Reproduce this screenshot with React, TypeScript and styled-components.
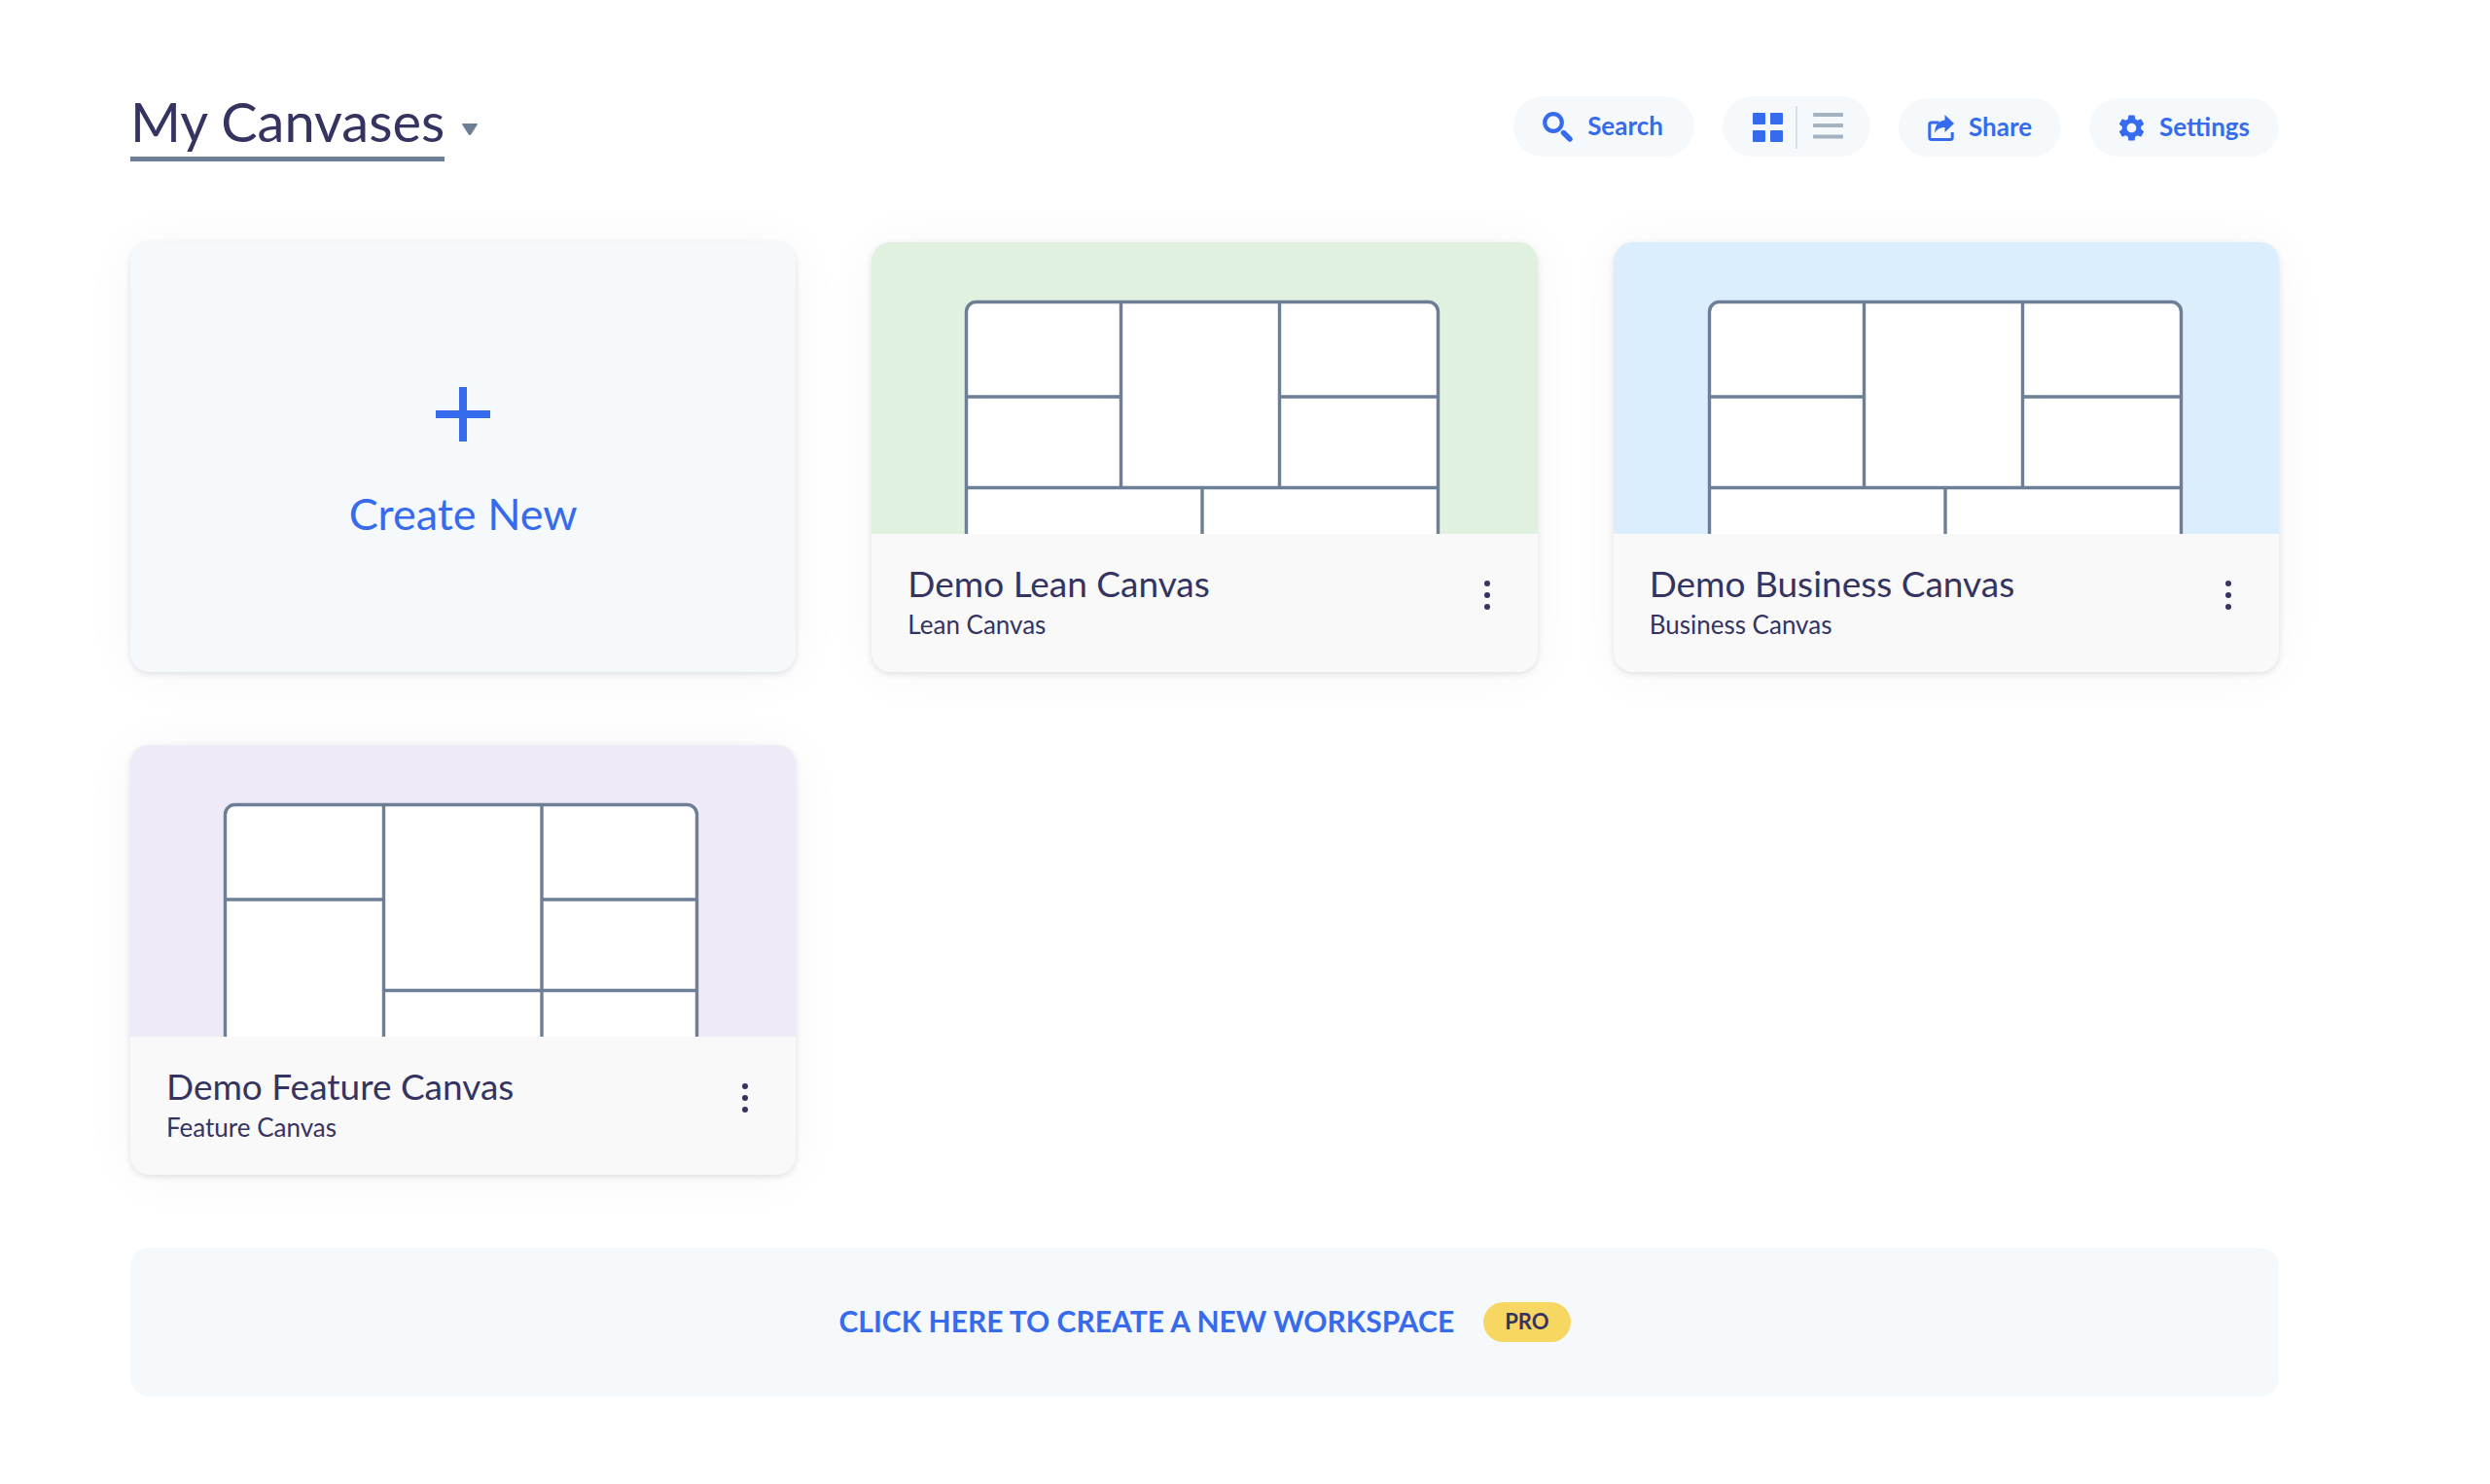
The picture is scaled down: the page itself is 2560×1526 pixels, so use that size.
import React from "react";
import styled, { createGlobalStyle } from "styled-components";

const color = {
  ink: "#353461",
  slate: "#6d7f96",
  blue: "#376bed",
  pale: "#f5f9fc",
  footer: "#f9f9f9",
  pro: "#f8d662",
};

const GlobalStyle = createGlobalStyle`
  *, *::before, *::after { box-sizing: border-box; }
  body {
    margin: 0;
    background: #ffffff;
    color: ${color.ink};
    font-family: Lato, "Open Sans", sans-serif;
  }
  button { font: inherit; color: inherit; border: 0; margin: 0; padding: 0; background: none; cursor: pointer; }
  svg { display: block; flex: none; }
  h1, h2, p { margin: 0; font-weight: 400; }
`;

const Page = styled.main`
  padding: 99px 217px 90px 134px;
`;

const Header = styled.header`
  display: flex;
  justify-content: space-between;
  align-items: flex-start;
  height: 150px;
`;

const WorkspaceButton = styled.button`
  display: flex;
  align-items: center;
  gap: 18px;
`;

const WorkspaceName = styled.span`
  font-size: 56px;
  line-height: 52px;
  padding-bottom: 10px;
  border-bottom: 5px solid ${color.slate};
`;

const Toolbar = styled.div`
  display: flex;
  align-items: flex-end;
  gap: 29px;
`;

const ToolButton = styled.button<{ $tall?: boolean }>`
  display: flex;
  align-items: center;
  gap: 15px;
  height: ${(p) => (p.$tall ? 62 : 60)}px;
  padding: 0 30px;
  padding-right: ${(p) => (p.$tall ? 32 : 30)}px;
  border-radius: 31px;
  background: ${color.pale};
  color: ${color.blue};
  font-size: 26px;
  line-height: 32px;
  font-weight: 700;
`;

const ToolLabel = styled.span`
  padding-bottom: 3px;
`;

const ViewToggle = styled.div`
  display: flex;
  align-items: center;
  height: 62px;
  padding: 1px 28px 0 31px;
  border-radius: 31px;
  background: ${color.pale};
`;

const ViewButton = styled.button<{ $active?: boolean }>`
  color: ${(p) => (p.$active ? color.blue : "#a5b2bf")};
`;

const Divider = styled.span`
  width: 2px;
  height: 44px;
  margin: 0 16px 0 13px;
  background: #dcdfec;
`;

const Grid = styled.section`
  display: grid;
  grid-template-columns: repeat(3, minmax(0, 1fr));
  gap: 75px 78px;
`;

const cardShadow = "0 2px 6px rgba(49, 48, 92, 0.13), 0 2px 56px rgba(0, 0, 0, 0.04)";

const CreateCard = styled.button`
  display: flex;
  flex-direction: column;
  align-items: center;
  justify-content: center;
  gap: 44px;
  min-height: 442px;
  padding-top: 16px;
  border-radius: 20px;
  background: ${color.pale};
  box-shadow: ${cardShadow};
  color: ${color.blue};
  font-size: 45px;
  line-height: 60px;
`;

const Card = styled.article`
  overflow: hidden;
  border-radius: 20px;
  background: ${color.footer};
  box-shadow: ${cardShadow};
`;

const Preview = styled.div<{ $tint: string }>`
  display: flex;
  justify-content: center;
  overflow: hidden;
  background: ${(p) => p.$tint};
`;

const CardFooter = styled.div`
  display: flex;
  justify-content: space-between;
  align-items: flex-start;
  height: 142px;
  padding: 27px 39px 27px 37px;
`;

const CardTitle = styled.h2`
  font-size: 37px;
  line-height: 48px;
`;

const CardKind = styled.p`
  font-size: 26px;
  line-height: 36px;
`;

const MenuButton = styled.button`
  padding: 21px 10px;
`;

const Banner = styled.button`
  display: flex;
  align-items: center;
  justify-content: center;
  gap: 30px;
  width: 100%;
  margin-top: 75px;
  padding: 56px 0;
  border-radius: 20px;
  background: ${color.pale};
  color: ${color.blue};
  font-size: 30px;
  line-height: 41px;
  font-weight: 700;
`;

const BannerLabel = styled.span`
  padding-bottom: 3px;
  line-height: 38px;
`;

const ProBadge = styled.span`
  padding: 0 22px 2px;
  border-radius: 21px;
  background: ${color.pro};
  color: ${color.ink};
  font-size: 22px;
  line-height: 39px;
`;

const SearchIcon = () => (
  <svg width="31" height="31" viewBox="0 0 31 31" fill="none" stroke="currentColor" aria-hidden="true">
    <circle cx="11" cy="11" r="8.8" strokeWidth="4.2" />
    <path d="M21.5 21.5 28 28" strokeWidth="5.4" strokeLinecap="round" />
  </svg>
);

const ShareIcon = () => (
  <svg width="27" height="27" viewBox="0 0 27 27" fill="none" stroke="currentColor" aria-hidden="true">
    <path d="M11.5 8H3.8a2 2 0 0 0-2 2v13.4a2 2 0 0 0 2 2h19.4a2 2 0 0 0 2-2V18" strokeWidth="3" />
    <path d="M17.5 0 27 9 17.5 18v-5C12.5 13 9.2 15 7 19c.2-8 4-13 10.500-13.500z" fill="currentColor" stroke="none" />
  </svg>
);

const GearIcon = () => (
  <svg width="27" height="27" viewBox="2.200 2 19.600 20" fill="currentColor" aria-hidden="true">
    <path d="M19.140 12.940c.04-.3.06-.61.06-.94 0-.32-.02-.64-.07-.94l2.030-1.580c.18-.14.23-.41.12-.61l-1.920-3.320c-.12-.22-.37-.29-.59-.22l-2.390.96c-.5-.38-1.030-.7-1.620-.94l-.36-2.540c-.04-.24-.24-.41-.48-.41h-3.840c-.24 0-.43.17-.47.41l-.36 2.540c-.59.24-1.130.57-1.620.94l-2.390-.96c-.22-.08-.47 0-.59.22L2.740 8.870c-.12.21-.08.47.12.61l2.030 1.580c-.05.3-.09.63-.09.94s.02.64.07.94l-2.030 1.580c-.18.14-.23.41-.12.61l1.920 3.320c.12.22.37.29.59.22l2.390-.96c.5.38 1.030.7 1.620.94l.36 2.540c.05.24.24.41.48.41h3.840c.24 0 .44-.17.47-.41l.36-2.540c.59-.24 1.130-.56 1.620-.94l2.390.96c.22.08.47 0 .59-.22l1.920-3.320c.12-.22.07-.47-.12-.61l-2.010-1.580zM12 15.600c-1.980 0-3.600-1.620-3.600-3.600s1.620-3.600 3.600-3.600 3.600 1.620 3.600 3.600-1.620 3.600-3.600 3.600z" />
  </svg>
);

const GridIcon = () => (
  <svg width="31" height="30" viewBox="0 0 31 30" fill="currentColor" aria-hidden="true">
    <rect width="13" height="12" rx="1" />
    <rect x="18" width="13" height="12" rx="1" />
    <rect y="18" width="13" height="12" rx="1" />
    <rect x="18" y="18" width="13" height="12" rx="1" />
  </svg>
);

const ListIcon = () => (
  <svg width="31" height="30" viewBox="0 0 31 30" fill="currentColor" aria-hidden="true">
    <rect y="0" width="31" height="4" rx="1" />
    <rect y="11" width="31" height="4" rx="1" />
    <rect y="22.500" width="31" height="4" rx="1" />
  </svg>
);

const CaretIcon = () => (
  <svg width="16" height="12" viewBox="0 0 16 12" fill={color.slate} aria-hidden="true">
    <path d="M1 0h14q1.500 0 .7 1.300L9.500 11q-1.500 1.800-3 0L.3 1.300Q-.5 0 1 0z" />
  </svg>
);

const PlusIcon = () => (
  <svg width="56" height="56" viewBox="0 0 56 56" stroke="currentColor" strokeWidth="8" aria-hidden="true">
    <path d="M28 0v56M0 28h56" />
  </svg>
);

const DotsIcon = () => (
  <svg width="6" height="30" viewBox="0 0 6 30" fill={color.ink} aria-hidden="true">
    <circle cx="3" cy="3" r="3" />
    <circle cx="3" cy="15" r="3" />
    <circle cx="3" cy="27" r="3" />
  </svg>
);

const Diagram = ({ left, lines }: { left: number; lines: string }) => (
  <svg width="684" height="300" viewBox={`${-left} 0 684 300`} fill="none" stroke={color.slate} strokeWidth="3.4" aria-hidden="true">
    <rect x="0" y="61.500" width="485" height="300" rx="10" fill="#ffffff" />
    <path d={lines} />
  </svg>
);

const modelLines = "M159 61.500V252.500M322 61.500V252.500M0 159H159M322 159H485M0 252.500H485M242.500 252.500V300";
const featureLines = "M163 61.500V300M325.500 61.500V300M0 159H163M325.500 159H485M163 252.500H485";

const canvases = [
  { title: "Demo Lean Canvas", kind: "Lean Canvas", tint: "#e0f1df", left: 97.5, lines: modelLines },
  { title: "Demo Business Canvas", kind: "Business Canvas", tint: "#dbeefd", left: 98.5, lines: modelLines },
  { title: "Demo Feature Canvas", kind: "Feature Canvas", tint: "#eeeaf7", left: 97.5, lines: featureLines },
];

export default function App() {
  return (
    <>
      <GlobalStyle />
      <Page>
        <Header>
          <h1>
            <WorkspaceButton type="button">
              <WorkspaceName>My Canvases</WorkspaceName>
              <CaretIcon />
            </WorkspaceButton>
          </h1>
          <Toolbar>
            <ToolButton type="button" $tall>
              <SearchIcon />
              <ToolLabel>Search</ToolLabel>
            </ToolButton>
            <ViewToggle>
              <ViewButton type="button" $active aria-label="Grid view">
                <GridIcon />
              </ViewButton>
              <Divider />
              <ViewButton type="button" aria-label="List view">
                <ListIcon />
              </ViewButton>
            </ViewToggle>
            <ToolButton type="button">
              <ShareIcon />
              <ToolLabel>Share</ToolLabel>
            </ToolButton>
            <ToolButton type="button">
              <GearIcon />
              <ToolLabel>Settings</ToolLabel>
            </ToolButton>
          </Toolbar>
        </Header>
        <Grid>
          <CreateCard type="button">
            <PlusIcon />
            Create New
          </CreateCard>
          {canvases.map((c) => (
            <Card key={c.title}>
              <Preview $tint={c.tint}>
                <Diagram left={c.left} lines={c.lines} />
              </Preview>
              <CardFooter>
                <div>
                  <CardTitle>{c.title}</CardTitle>
                  <CardKind>{c.kind}</CardKind>
                </div>
                <MenuButton type="button" aria-label={`${c.title} options`}>
                  <DotsIcon />
                </MenuButton>
              </CardFooter>
            </Card>
          ))}
        </Grid>
        <Banner type="button">
          <BannerLabel>CLICK HERE TO CREATE A NEW WORKSPACE</BannerLabel>
          <ProBadge>PRO</ProBadge>
        </Banner>
      </Page>
    </>
  );
}
